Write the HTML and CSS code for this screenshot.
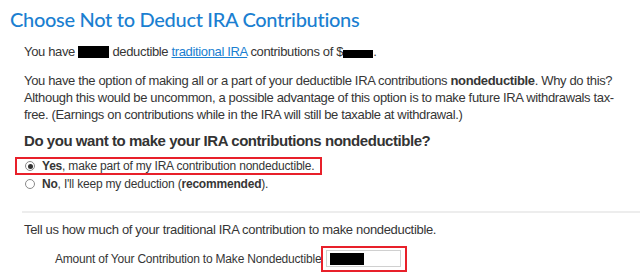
FILE: index.html
```html
<!DOCTYPE html>
<html lang="en">
<head>
    <meta charset="UTF-8">
    <meta name="viewport" content="width=device-width, initial-scale=1.0">
    <title>Choose Not to Deduct IRA Contributions</title>
    <link rel="stylesheet" href="styles.css">
</head>
<body>
    <h1 class="page-title">Choose Not to Deduct IRA Contributions</h1>

    <div class="content">
        <p class="summary">
            You have <span class="redact redact-count"></span> deductible
            <a href="#" class="link">traditional IRA</a> contributions of $<span class="redact redact-amount"></span>.
        </p>

        <p class="explain">
            You have the option of making all or a part of your deductible IRA contributions <b>nondeductible</b>. Why do this?<br>
            Although this would be uncommon, a possible advantage of this option is to make future IRA withdrawals tax-<br>free.
            (Earnings on contributions while in the IRA will still be taxable at withdrawal.)
        </p>

        <h2 class="question">Do you want to make your IRA contributions nondeductible?</h2>

        <div class="choices">
            <label class="choice choice-highlight">
                <input type="radio" name="nondeduct" checked>
                <span><b>Yes</b>, make part of my IRA contribution nondeductible.</span>
            </label>
            <label class="choice">
                <input type="radio" name="nondeduct">
                <span><b>No</b>, I'll keep my deduction (<b>recommended</b>).</span>
            </label>
        </div>
    </div>

    <div class="divider"></div>

    <div class="content">
        <p class="ask">Tell us how much of your traditional IRA contribution to make nondeductible.</p>

        <div class="amount-row">
            <label class="amount-label" for="amount">Amount of Your Contribution to Make Nondeductible</label>
            <span class="input-highlight">
                <span class="amount-input" id="amount"><span class="redact redact-input"></span></span>
            </span>
        </div>
    </div>
</body>
</html>
```

FILE: styles.css
```css
body {
    margin: 0;
    padding: 0;
    background-color: #fff;
    color: #363636;
    font-family: "Liberation Sans", Arial, sans-serif;
    font-size: 13px;
    letter-spacing: -0.35px;
}

.page-title {
    margin: 0;
    padding: 6px 0 0 10px;
    font-family: "Lato", "Open Sans", sans-serif;
    font-weight: 500;
    font-size: 20px;
    letter-spacing: -0.3px;
    line-height: 26px;
    color: #1b7fd1;
}

.content {
    padding-left: 24px;
}

.summary {
    margin: 11px 0 0;
    line-height: 17px;
}

.redact {
    display: inline-block;
    background-color: #000;
}

.redact-count {
    width: 31px;
    height: 12px;
    vertical-align: -2px;
}

.redact-amount {
    width: 30px;
    height: 8px;
    vertical-align: -2px;
}

.link {
    color: #1b7fd1;
}

.explain {
    margin: 12px 0 0;
    line-height: 17px;
}

.question {
    margin: 8px 0 0;
    font-size: 15px;
    letter-spacing: -0.45px;
    line-height: 20px;
    font-weight: bold;
    color: #333;
}

.choices {
    margin-top: 6px;
    margin-left: -9px;
    font-size: 12px;
    letter-spacing: -0.2px;
}

.choice {
    display: flex;
    align-items: center;
    gap: 7px;
    padding: 0 6px 0 8px;
    line-height: 14px;
    width: fit-content;
    border: 2px solid transparent;
}

.choice input {
    appearance: none;
    margin: 0;
    width: 10px;
    height: 10px;
    border: 1px solid #8a8a8a;
    border-radius: 50%;
    background-color: #fff;
    display: grid;
    place-content: center;
}

.choice input:checked::before {
    content: "";
    width: 5px;
    height: 5px;
    border-radius: 50%;
    background-color: #333;
}

.choice-highlight {
    border-color: #e8202a;
}

.divider {
    margin: 18px 0 0 22px;
    border-top: 2px solid #ededed;
}

.ask {
    margin: 8px 0 0;
    line-height: 17px;
    letter-spacing: -0.32px;
}

.amount-row {
    margin: 8px 0 0 31px;
    display: flex;
    align-items: center;
    font-size: 12px;
    letter-spacing: -0.2px;
}

.input-highlight {
    padding: 2px 4px 3px 3px;
    border: 2px solid #e8202a;
}

.amount-input {
    display: flex;
    align-items: center;
    box-sizing: border-box;
    width: 75px;
    height: 17px;
    padding-left: 3px;
    border: 1px solid #d0d0d0;
}

.redact-input {
    width: 34px;
    height: 12px;
}
```
